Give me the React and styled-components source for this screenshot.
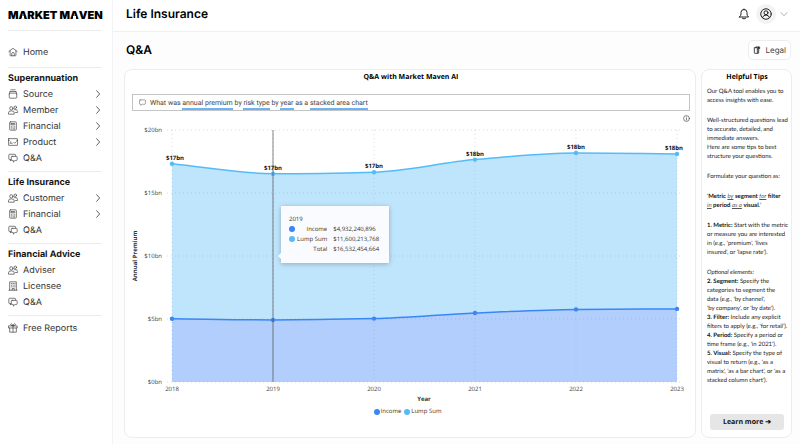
import React from "react";
import styled, { createGlobalStyle } from "styled-components";

const BODY = '"Open Sans", "Noto Sans", sans-serif';
const UI = 'Inter, "Liberation Sans", sans-serif';

const GlobalStyle = createGlobalStyle`
  *, *::before, *::after { box-sizing: border-box; }
  body { margin: 0; background: #fff; color: #222; font-family: ${UI}; text-rendering: geometricPrecision; }
  h1, h2, h3, p, ul { margin: 0; padding: 0; }
  button, input { font: inherit; color: inherit; text-rendering: inherit; }
`;

const Shell = styled.div`
  display: grid;
  grid-template-columns: 113px minmax(0, 1fr);
  min-height: 100vh;
`;

/* Sidebar */
const Sidebar = styled.nav`
  padding: 0 10px 0 8px;
  border-right: 1px solid #f3f3f7;
`;
const Logo = styled.a`
  display: flex;
  align-items: center;
  height: 30px;
  font-size: 11px;
  font-weight: 900;
  color: #000;
  white-space: nowrap;
  text-decoration: none;
`;
const OpenA = styled.span`
  position: relative;
  &::after {
    content: "";
    position: absolute;
    left: 3px;
    right: 3px;
    top: 8px;
    height: 4px;
    background: #fff;
  }
`;
const Section = styled.section`
  padding: ${(p) => (p.$roomy ? "13px 0 7px" : "4px 0 5px")};
  border-top: 1px solid #ececec;
`;
const SectionTitle = styled.h3`
  font-size: 9px;
  line-height: 14px;
  font-weight: 700;
  color: #151515;
  white-space: nowrap;
`;
const NavList = styled.ul`
  list-style: none;
`;
const NavLink = styled.a`
  display: flex;
  align-items: center;
  gap: 5px;
  height: 16px;
  font-size: 9px;
  color: #333;
  text-decoration: none;
  span { flex: 1; }
`;

const Glyph = styled.svg`
  flex: none;
  width: ${(p) => p.$size || 10}px;
  height: ${(p) => p.$size || 10}px;
  fill: none;
  stroke: ${(p) => p.$color || "#444"};
  stroke-width: ${(p) => p.$weight || 1.7};
  stroke-linecap: round;
  stroke-linejoin: round;
`;

const shapes = {
  home: <path d="M2 11 12 3l10 8M5 9v11q0 1 1 1h12q1 0 1-1V9M9 21v-5a3 3 0 0 1 6 0v5" />,
  source: <path d="M7 2h10M5 6h14M3 12q0-2 2-2h14q2 0 2 2v8q0 2-2 2H5q-2 0-2-2zM5 6 3 12M19 6l2 6" />,
  people: (
    <>
      <circle cx="8" cy="8" r="4" />
      <path d="M1 21v-2q0-5 7-5t7 5v2z" />
      <circle cx="17.500" cy="5.500" r="3" />
      <path d="M15 11q8-2 8 5v2h-5" />
    </>
  ),
  calc: (
    <>
      <rect x="4" y="2" width="16" height="20" rx="2" />
      <path d="M8 6h8v3H8zM8 13h.1M12 13h.1M16 13h.1M8 16h.1M12 16h.1M16 16h.1M8 19h.1M12 19h4" />
    </>
  ),
  product: (
    <>
      <rect x="1" y="4" width="22" height="16" rx="1" />
      <path d="M5 15h5M5 12h2M14 13l2 2 4-4M1 8h2M21 8h2" />
    </>
  ),
  chat: (
    <>
      <path d="M6 16H4q-2 0-2-2V5q0-2 2-2h12q2 0 2 2v2" />
      <path d="M10 8h10q2 0 2 2v6q0 2-2 2h-3l-4 4v-4h-3q-2 0-2-2v-6q0-2 2-2zM6 16v3l2-2" />
    </>
  ),
  building: <path d="M2 22h20M4 22V2h16v20M8 6h1M12 6h1M16 6h1M8 10h1M12 10h1M16 10h1M8 14h1M12 14h1M16 14h1M10 22v-4h5v4" />,
  gift: <path d="M2 7h20v5H2zM4 12v10h16V12M12 7v15M12 7C4 7 6 1 9 2q2 1 3 5c1-4 3-5 3-5 4-1 5 5-3 5" />,
  right: <path d="m8 2 9 10-9 10" />,
  down: <path d="m3 8 9 9 9-9" />,
  bell: <path d="M12 2v1M3 18h18q-3-3-3-6v-3a6 6 0 0 0-12 0v3q0 3-3 6zM9 21q3 2 6 0" />,
  user: (
    <>
      <circle cx="12" cy="12" r="10.500" />
      <circle cx="12" cy="9.500" r="4" />
      <path d="M5 19q2-5 7-5t7 5" />
    </>
  ),
  legal: <path d="M8 5V3h12v5h-3M17 4v16q0 2-2 2H6q-2 0-2-2V5h9v14q0 2 2 2M17 3q-3 0-3 3" />,
  bubble: <path d="M4 3h16q2 0 2 2v11q0 2-2 2h-9l-5 4v-4H4q-2 0-2-2V5q0-2 2-2z" />,
  info: (
    <>
      <circle cx="12" cy="12" r="10" />
      <path d="M12 11v6M12 7v.1" />
    </>
  ),
};

function Icon({ name, size, color, weight }) {
  return (
    <Glyph viewBox="0 0 24 24" $size={size} $color={color} $weight={weight} aria-hidden="true">
      {shapes[name]}
    </Glyph>
  );
}

/* Page header */
const Page = styled.div`
  display: flex;
  flex-direction: column;
  min-width: 0;
`;
const TopBar = styled.header`
  display: flex;
  align-items: center;
  justify-content: space-between;
  height: 32px;
  padding: 0 12px 3px 13px;
  border-bottom: 1px solid #f0f0f0;
`;
const PageTitle = styled.h1`
  font-size: 12px;
  line-height: 16px;
  font-weight: 600;
  color: #000;
`;
const SubTitle = styled(PageTitle).attrs({ as: "h2" })``;
const Actions = styled.div`
  display: flex;
  align-items: center;
  gap: 6px;
`;
const IconButton = styled.button`
  display: flex;
  align-items: center;
  padding: 0;
  border: 0;
  background: none;
`;
const Account = styled(IconButton)`
  gap: 4px;
`;
const Avatar = styled.span`
  display: flex;
  align-items: center;
  justify-content: center;
  width: 20px;
  height: 20px;
  border-radius: 50%;
  background: #f3f3f3;
`;
const Content = styled.main`
  display: flex;
  flex: 1;
  flex-direction: column;
  padding: 8px 8px 6px 11px;
  background: #fdfdfd;
`;
const Heading = styled.div`
  display: flex;
  align-items: center;
  justify-content: space-between;
  padding: 0 1px 9px 2px;
`;
const LegalButton = styled.button`
  display: flex;
  align-items: center;
  gap: 4px;
  height: 20px;
  padding: 0 4px;
  border: 1px solid #ededed;
  border-radius: 5px;
  background: #fff;
  font-size: 8px;
  color: #444;
`;
const Columns = styled.div`
  display: grid;
  flex: 1;
  grid-template-columns: minmax(0, 1fr) 91px;
  gap: 5px;
`;
const Card = styled.section`
  display: flex;
  flex-direction: column;
  border: 1px solid #ededed;
  border-radius: 8px;
  background: #fff;
  font-family: ${BODY};
`;

/* Question and chart */
const ChartCard = styled(Card)`
  padding: 3px 5px 18px 7px;
`;
const CardTitle = styled.h3`
  font-family: ${BODY};
  font-size: 7px;
  line-height: 10px;
  font-weight: 700;
  text-align: center;
  color: #000;
`;
const AskBox = styled.label`
  display: flex;
  align-items: center;
  gap: 4px;
  height: 17px;
  margin-top: 11px;
  padding: 0 6px;
  border: 1px solid #c4c4c4;
`;
const AskField = styled.span`
  display: grid;
  flex: 1;
  align-items: center;
  font-family: Roboto, ${BODY};
  font-size: 7px;
  line-height: 10px;
  > * { grid-area: 1 / 1; }
`;
const AskInput = styled.input`
  width: 100%;
  height: 12px;
  padding: 0;
  border: 0;
  outline: 0;
  background: none;
  color: #444;
`;
const AskMarks = styled.span`
  color: transparent;
  white-space: pre;
  mark {
    padding-bottom: 1px;
    border-bottom: 2px solid #6db3f2;
    background: none;
    color: transparent;
  }
`;
const InfoRow = styled.div`
  display: flex;
  justify-content: flex-end;
  height: 11px;
  padding-top: 4px;
`;
const ChartArea = styled.div`
  position: relative;
`;
const Plot = styled.svg`
  display: block;
  width: 100%;
  height: auto;
  font-family: ${BODY};
  font-size: 6px;
  fill: #444;
`;
const Legend = styled.ul`
  display: flex;
  justify-content: center;
  gap: 3px;
  margin-top: 2px;
  padding-right: 7px;
  list-style: none;
  font-size: 6px;
  line-height: 9px;
  color: #333;
  li { display: flex; align-items: center; gap: 1px; }
`;
const Dot = styled.i`
  width: 6px;
  height: 6px;
  border-radius: 50%;
  background: ${(p) => p.$color};
`;
const Tooltip = styled.div`
  position: absolute;
  left: 149px;
  top: 84px;
  width: 108px;
  padding: 8px 8px 9px;
  background: #fafbfe;
  box-shadow: 0 1px 5px rgba(0, 0, 0, 0.25);
  font-size: 6px;
  line-height: 10px;
  color: #333;
  &::before {
    content: "";
    position: absolute;
    left: -3px;
    bottom: 4px;
    border: 3px solid transparent;
    border-left: 0;
    border-right-color: #fafbfe;
  }
`;
const TipTable = styled.table`
  width: 100%;
  border-collapse: collapse;
  td, th { padding: 0; font-weight: 400; text-align: right; white-space: nowrap; }
  td:first-child { width: 7px; }
  td:last-child { padding-left: 6px; text-align: left; }
  i { display: block; }
`;

/* Tips */
const TipsCard = styled(Card)`
  padding: 3px 4px 7px 5px;
  font-family: Lato, ${BODY};
  font-size: 6px;
  line-height: 9px;
  color: #222;
  b { color: #111; }
  u { font-style: italic; color: #555; }
`;
const Tip = styled.p`
  margin-bottom: 11px;
  white-space: nowrap;
`;
const TipsTitle = styled(CardTitle)`
  margin-bottom: 4px;
`;
const LearnMore = styled.button`
  height: 16px;
  margin: auto 3px 0;
  padding: 0;
  border: 0;
  border-radius: 3px;
  background: #e6e6e6;
  color: #111;
  font-family: ${BODY};
  font-size: 7px;
  font-weight: 700;
`;

const BLUE = "#3a86f7";
const SKY = "#55bbf8";

const menu = [
  { roomy: true, items: [["home", "Home"]] },
  {
    title: "Superannuation",
    items: [
      ["source", "Source", true],
      ["people", "Member", true],
      ["calc", "Financial", true],
      ["product", "Product", true],
      ["chat", "Q&A"],
    ],
  },
  {
    title: "Life Insurance",
    items: [
      ["people", "Customer", true],
      ["calc", "Financial", true],
      ["chat", "Q&A"],
    ],
  },
  {
    title: "Financial Advice",
    items: [
      ["people", "Adviser"],
      ["building", "Licensee"],
      ["chat", "Q&A"],
    ],
  },
  { items: [["gift", "Free Reports"]] },
];

const years = [2018, 2019, 2020, 2021, 2022, 2023];
const income = [5.02, 4.93, 5.03, 5.48, 5.76, 5.8];
const total = [17.32, 16.53, 16.65, 17.65, 18.17, 18.1];
const totalLabels = ["$17bn", "$17bn", "$17bn", "$18bn", "$18bn", "$18bn"];
const ticks = [20, 15, 10, 5, 0];

const xAt = (i) => 40 + i * 101;
const yAt = (v) => 260 - v * 12.6;

function curve(values) {
  const pts = values.map((v, i) => [xAt(i), yAt(v)]);
  const slope = pts.slice(1).map((p, i) => (p[1] - pts[i][1]) / 101);
  const tangent = pts.map((_, i) => {
    if (i === 0) return slope[0];
    if (i === pts.length - 1) return slope[i - 1];
    const a = slope[i - 1];
    const b = slope[i];
    return a * b <= 0 ? 0 : (2 * a * b) / (a + b);
  });
  return pts
    .map(([x, y], i) => {
      if (i === 0) return `M${x} ${y}`;
      const [px, py] = pts[i - 1];
      const d = 101 / 3;
      return `C${px + d} ${py + tangent[i - 1] * d} ${x - d} ${y - tangent[i] * d} ${x} ${y}`;
    })
    .join("");
}

function Chart() {
  const top = curve(total);
  const bottom = curve(income);
  return (
    <Plot viewBox="0 0 558 283" role="img" aria-label="Annual premium by year">
      <path d={`${top}V260H40Z`} fill="#bfe5fc" />
      <path d={`${bottom}V260H40Z`} fill="#b1cefc" />
      <g stroke="#8a9bb0" strokeOpacity="0.35" strokeWidth="1" strokeDasharray="1 3">
        {ticks.map((t) => (
          <path key={t} d={`M35 ${yAt(t)}H548`} />
        ))}
        {years.map((y, i) => (
          <path key={y} d={`M${xAt(i)} 8V260`} />
        ))}
      </g>
      <g fill="none" strokeWidth="1.500">
        <path d={top} stroke={SKY} />
        <path d={bottom} stroke={BLUE} />
      </g>
      {years.map((y, i) => (
        <g key={y}>
          <circle cx={xAt(i)} cy={yAt(total[i])} r="2.200" fill={SKY} />
          <circle cx={xAt(i)} cy={yAt(income[i])} r="2.200" fill={BLUE} />
        </g>
      ))}
      <path d="M141 8V260" stroke="#555" strokeOpacity="0.6" strokeWidth="1.200" />
      <g fontWeight="700" fill="#111" textAnchor="middle">
        {years.map((y, i) => (
          <text key={y} x={xAt(i) + (i ? 0 : 3) - (i === 5 ? 3 : 0)} y={yAt(total[i]) - 4}>
            {totalLabels[i]}
          </text>
        ))}
      </g>
      <g textAnchor="end">
        {ticks.map((t) => (
          <text key={t} x="30" y={yAt(t) + 2}>{`$${t}bn`}</text>
        ))}
      </g>
      <g textAnchor="middle">
        {years.map((y, i) => (
          <text key={y} x={xAt(i)} y="269">
            {y}
          </text>
        ))}
      </g>
      <g textAnchor="middle" fontWeight="700" fill="#333">
        <text x="292" y="279">Year</text>
        <text transform="translate(5 134) rotate(-90)">Annual Premium</text>
      </g>
    </Plot>
  );
}

export default function App() {
  return (
    <>
      <GlobalStyle />
      <Shell>
        <Sidebar aria-label="Main">
          <Logo href="#">
            M<OpenA>A</OpenA>RKET&nbsp;M<OpenA>A</OpenA>VEN
          </Logo>
          {menu.map((group, g) => (
            <Section key={g} $roomy={group.roomy}>
              {group.title && <SectionTitle>{group.title}</SectionTitle>}
              <NavList>
                {group.items.map(([icon, label, more]) => (
                  <li key={label}>
                    <NavLink href="#">
                      <Icon name={icon} />
                      <span>{label}</span>
                      {more && <Icon name="right" size={8} weight={2.5} />}
                    </NavLink>
                  </li>
                ))}
              </NavList>
            </Section>
          ))}
        </Sidebar>
        <Page>
          <TopBar>
            <PageTitle>Life Insurance</PageTitle>
            <Actions>
              <IconButton aria-label="Notifications">
                <Icon name="bell" size={12} weight={2} color="#222" />
              </IconButton>
              <Account aria-label="Account">
                <Avatar>
                  <Icon name="user" size={12} weight={2} color="#222" />
                </Avatar>
                <Icon name="down" size={8} weight={2.5} color="#8b97a8" />
              </Account>
            </Actions>
          </TopBar>
          <Content>
            <Heading>
              <SubTitle>Q&amp;A</SubTitle>
              <LegalButton>
                <Icon name="legal" size={8} weight={2.5} color="#222" />
                Legal
              </LegalButton>
            </Heading>
            <Columns>
              <ChartCard>
                <CardTitle>Q&amp;A with Market Maven AI</CardTitle>
                <AskBox>
                  <Icon name="bubble" size={7} weight={2} color="#666" />
                  <AskField>
                    <AskMarks aria-hidden="true">
                      What was <mark>annual premium</mark> by <mark>risk type</mark> by <mark>year</mark> as a{" "}
                      <mark>stacked area chart</mark>
                    </AskMarks>
                    <AskInput
                      aria-label="Ask a question"
                      defaultValue="What was annual premium by risk type by year as a stacked area chart"
                    />
                  </AskField>
                </AskBox>
                <InfoRow>
                  <Icon name="info" size={7} weight={2.5} color="#555" />
                </InfoRow>
                <ChartArea>
                  <Chart />
                  <Tooltip role="tooltip">
                    2019
                    <TipTable>
                      <tbody>
                        <tr>
                          <td><Dot $color={BLUE} /></td>
                          <th scope="row">Income</th>
                          <td>$4,932,240,896</td>
                        </tr>
                        <tr>
                          <td><Dot $color={SKY} /></td>
                          <th scope="row">Lump Sum</th>
                          <td>$11,600,213,768</td>
                        </tr>
                        <tr>
                          <td />
                          <th scope="row">Total</th>
                          <td>$16,532,454,664</td>
                        </tr>
                      </tbody>
                    </TipTable>
                  </Tooltip>
                </ChartArea>
                <Legend>
                  <li><Dot $color={BLUE} />Income</li>
                  <li><Dot $color={SKY} />Lump Sum</li>
                </Legend>
              </ChartCard>
              <TipsCard as="aside">
                <TipsTitle>Helpful Tips</TipsTitle>
                <Tip>
                  Our Q&amp;A tool enables you to<br />access insights with ease.
                </Tip>
                <Tip>
                  Well-structured questions lead<br />to accurate, detailed, and<br />immediate answers.<br />
                  Here are some tips to best<br />structure your questions.
                </Tip>
                <Tip>Formulate your question as:</Tip>
                <Tip>
                  '<b>Metric</b> <u>by</u> <b>segment</b> <u>for</u> <b>filter</b><br />
                  <u>in</u> <b>period</b> <u>as a</u> <b>visual.</b>'
                </Tip>
                <Tip>
                  <b>1. Metric:</b> Start with the metric<br />or measure you are interested<br />
                  in (e.g., 'premium', 'lives<br />insured', or 'lapse rate').
                </Tip>
                <Tip>
                  <em>Optional elements:</em><br />
                  <b>2. Segment:</b> Specify the<br />categories to segment the<br />data (e.g., 'by channel',<br />
                  'by company', or 'by date').<br />
                  <b>3. Filter:</b> Include any explicit<br />filters to apply (e.g., 'for retail').<br />
                  <b>4. Period:</b> Specify a period or<br />time frame (e.g., 'in 2021').<br />
                  <b>5. Visual:</b> Specify the type of<br />visual to return (e.g., 'as a<br />
                  matrix', 'as a bar chart', or 'as a<br />stacked column chart').
                </Tip>
                <LearnMore>Learn more ➔</LearnMore>
              </TipsCard>
            </Columns>
          </Content>
        </Page>
      </Shell>
    </>
  );
}
